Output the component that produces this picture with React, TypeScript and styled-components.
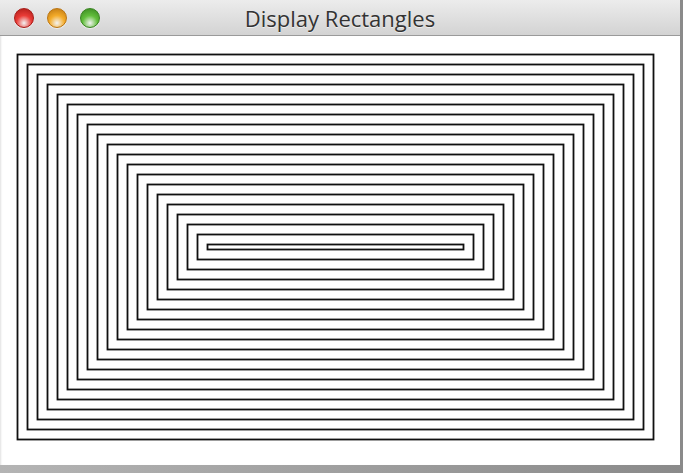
import React from "react";
import styled, { createGlobalStyle } from "styled-components";

const GlobalStyle = createGlobalStyle`
  html, body {
    margin: 0;
    padding: 0;
    background: #8e8e8e;
    overflow: hidden;
  }
`;

const Desktop = styled.div`
  width: 683px;
  height: 473px;
  background: linear-gradient(90deg, #b4b4b4, #8a8a8a);
`;

const Window = styled.div`
  width: 680px;
  height: 465px;
  display: flex;
  flex-direction: column;
  background: #ffffff;
  box-shadow: inset 2px 0 2px -1px rgba(0, 0, 0, 0.12);
`;

const TitleBar = styled.div`
  position: relative;
  height: 35px;
  flex-shrink: 0;
  display: flex;
  align-items: center;
  justify-content: center;
  background: linear-gradient(#ececec, #d3d3d3);
  border-bottom: 1px solid #9a9a9a;
`;

const Lights = styled.div`
  position: absolute;
  left: 14px;
  top: 8px;
  display: flex;
  gap: 13px;
`;

const Light = styled.span<{ $base: string; $dark: string }>`
  width: 20px;
  height: 20px;
  border-radius: 50%;
  box-sizing: border-box;
  border: 1px solid ${(p) => p.$dark};
  background: radial-gradient(
    circle at 50% 78%,
    rgba(255, 255, 255, 0.65) 0%,
    ${(p) => p.$base} 45%,
    ${(p) => p.$dark} 100%
  );
  box-shadow: 0 1px 1px rgba(255, 255, 255, 0.6);
`;

const Title = styled.div`
  font-family: "Open Sans", "DejaVu Sans", sans-serif;
  font-size: 22px;
  line-height: 1;
  margin-top: 1px;
  color: #333333;
  text-shadow: 0 1px 0 rgba(255, 255, 255, 0.6);
`;

const Canvas = styled.svg`
  display: block;
  flex: 1;
`;

const COUNT = 20;

function App() {
  const rects = Array.from({ length: COUNT }, (_, i) => ({
    x: 17 + 10 * i,
    y: 18 + 10 * i,
    w: 636 - 20 * i,
    h: 385 - 20 * i,
  }));

  return (
    <>
      <GlobalStyle />
      <Desktop>
        <Window>
          <TitleBar>
            <Lights>
              <Light $base="#ea3c37" $dark="#a81a16" />
              <Light $base="#f4ac2a" $dark="#bb7410" />
              <Light $base="#62be3c" $dark="#37841f" />
            </Lights>
            <Title>Display Rectangles</Title>
          </TitleBar>
          <Canvas width={680} height={429}>
            {rects.map((r, i) => (
              <rect
                key={i}
                x={r.x + 0.5}
                y={r.y + 0.5}
                width={r.w}
                height={r.h}
                fill="none"
                stroke="#111"
                strokeWidth={1.8}
              />
            ))}
          </Canvas>
        </Window>
      </Desktop>
    </>
  );
}

export default App;
